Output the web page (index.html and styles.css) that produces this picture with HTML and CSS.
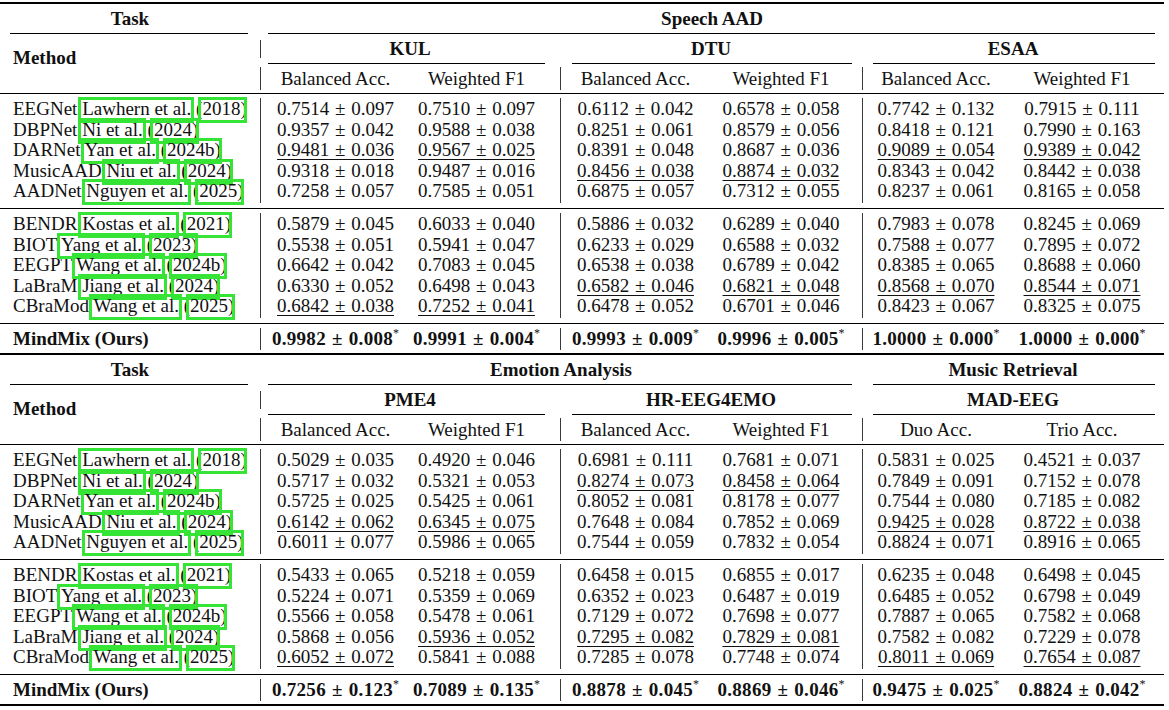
FILE: index.html
```html
<!DOCTYPE html>
<html>
<head>
<meta charset="utf-8">
<title>MindMix results</title>
<link rel="stylesheet" href="styles.css">
</head>
<body>
<table class="tbl t1">
<colgroup><col class="w-m"><col class="w-a"><col class="w-b"><col class="w-a"><col class="w-c"><col class="w-d"><col class="w-e"></colgroup>
<thead>
<tr class="r-task"><th class="task">Task</th><th colspan="6" class="grp g-all">Speech AAD</th></tr>
<tr class="r-ds"><th rowspan="2" class="method">Method</th><th colspan="2" class="ds k1 bar">KUL</th><th colspan="2" class="ds k2">DTU</th><th colspan="2" class="ds k3">ESAA</th></tr>
<tr class="r-sub"><th class="bar">Balanced Acc.</th><th class="p1">Weighted F1</th><th class="bar">Balanced Acc.</th><th class="p2">Weighted F1</th><th class="bar">Balanced Acc.</th><th class="p3">Weighted F1</th></tr>
</thead>
<tbody>
<tr class="first"><td class="m">EEGNet <span class="ct">Lawhern et al.</span> (<span class="ct y">2018</span>)</td><td class="bar">0.7514 ± 0.097</td><td class="p1">0.7510 ± 0.097</td><td class="bar">0.6112 ± 0.042</td><td class="p2">0.6578 ± 0.058</td><td class="bar">0.7742 ± 0.132</td><td class="p3">0.7915 ± 0.111</td></tr>
<tr><td class="m">DBPNet <span class="ct">Ni et al.</span> (<span class="ct y">2024</span>)</td><td class="bar">0.9357 ± 0.042</td><td class="p1">0.9588 ± 0.038</td><td class="bar">0.8251 ± 0.061</td><td class="p2">0.8579 ± 0.056</td><td class="bar">0.8418 ± 0.121</td><td class="p3">0.7990 ± 0.163</td></tr>
<tr><td class="m">DARNet <span class="ct">Yan et al.</span> (<span class="ct y">2024b</span>)</td><td class="bar"><u>0.9481 ± 0.036</u></td><td class="p1"><u>0.9567 ± 0.025</u></td><td class="bar">0.8391 ± 0.048</td><td class="p2">0.8687 ± 0.036</td><td class="bar"><u>0.9089 ± 0.054</u></td><td class="p3"><u>0.9389 ± 0.042</u></td></tr>
<tr><td class="m">MusicAAD <span class="ct">Niu et al.</span> (<span class="ct y">2024</span>)</td><td class="bar">0.9318 ± 0.018</td><td class="p1">0.9487 ± 0.016</td><td class="bar"><u>0.8456 ± 0.038</u></td><td class="p2"><u>0.8874 ± 0.032</u></td><td class="bar">0.8343 ± 0.042</td><td class="p3">0.8442 ± 0.038</td></tr>
<tr class="last"><td class="m">AADNet <span class="ct">Nguyen et al.</span> (<span class="ct y">2025</span>)</td><td class="bar">0.7258 ± 0.057</td><td class="p1">0.7585 ± 0.051</td><td class="bar">0.6875 ± 0.057</td><td class="p2">0.7312 ± 0.055</td><td class="bar">0.8237 ± 0.061</td><td class="p3">0.8165 ± 0.058</td></tr>
</tbody>
<tbody>
<tr class="first"><td class="m">BENDR <span class="ct">Kostas et al.</span> (<span class="ct y">2021</span>)</td><td class="bar">0.5879 ± 0.045</td><td class="p1">0.6033 ± 0.040</td><td class="bar">0.5886 ± 0.032</td><td class="p2">0.6289 ± 0.040</td><td class="bar">0.7983 ± 0.078</td><td class="p3">0.8245 ± 0.069</td></tr>
<tr><td class="m">BIOT <span class="ct">Yang et al.</span> (<span class="ct y">2023</span>)</td><td class="bar">0.5538 ± 0.051</td><td class="p1">0.5941 ± 0.047</td><td class="bar">0.6233 ± 0.029</td><td class="p2">0.6588 ± 0.032</td><td class="bar">0.7588 ± 0.077</td><td class="p3">0.7895 ± 0.072</td></tr>
<tr><td class="m">EEGPT <span class="ct">Wang et al.</span> (<span class="ct y">2024b</span>)</td><td class="bar">0.6642 ± 0.042</td><td class="p1">0.7083 ± 0.045</td><td class="bar">0.6538 ± 0.038</td><td class="p2">0.6789 ± 0.042</td><td class="bar">0.8385 ± 0.065</td><td class="p3">0.8688 ± 0.060</td></tr>
<tr><td class="m">LaBraM <span class="ct">Jiang et al.</span> (<span class="ct y">2024</span>)</td><td class="bar">0.6330 ± 0.052</td><td class="p1">0.6498 ± 0.043</td><td class="bar"><u>0.6582 ± 0.046</u></td><td class="p2"><u>0.6821 ± 0.048</u></td><td class="bar"><u>0.8568 ± 0.070</u></td><td class="p3"><u>0.8544 ± 0.071</u></td></tr>
<tr class="last"><td class="m">CBraMod <span class="ct">Wang et al.</span> (<span class="ct y">2025</span>)</td><td class="bar"><u>0.6842 ± 0.038</u></td><td class="p1"><u>0.7252 ± 0.041</u></td><td class="bar">0.6478 ± 0.052</td><td class="p2">0.6701 ± 0.046</td><td class="bar">0.8423 ± 0.067</td><td class="p3">0.8325 ± 0.075</td></tr>
</tbody>
<tbody>
<tr class="first last ours"><td class="m"><b>MindMix (Ours)</b></td><td class="bar"><b>0.9982 ± 0.008</b><sup>*</sup></td><td class="p1"><b>0.9991 ± 0.004</b><sup>*</sup></td><td class="bar"><b>0.9993 ± 0.009</b><sup>*</sup></td><td class="p2"><b>0.9996 ± 0.005</b><sup>*</sup></td><td class="bar"><b>1.0000 ± 0.000</b><sup>*</sup></td><td class="p3"><b>1.0000 ± 0.000</b><sup>*</sup></td></tr>
</tbody>
</table>

<table class="tbl t2">
<colgroup><col class="w-m"><col class="w-a"><col class="w-b"><col class="w-a"><col class="w-c"><col class="w-d"><col class="w-e"></colgroup>
<thead>
<tr class="r-task"><th class="task">Task</th><th colspan="4" class="grp g-emo">Emotion Analysis</th><th colspan="2" class="grp g-mus">Music Retrieval</th></tr>
<tr class="r-ds"><th rowspan="2" class="method">Method</th><th colspan="2" class="ds k1 bar">PME4</th><th colspan="2" class="ds k2">HR-EEG4EMO</th><th colspan="2" class="ds k3">MAD-EEG</th></tr>
<tr class="r-sub"><th class="bar">Balanced Acc.</th><th class="p1">Weighted F1</th><th class="bar">Balanced Acc.</th><th class="p2">Weighted F1</th><th class="bar">Duo Acc.</th><th class="p3">Trio Acc.</th></tr>
</thead>
<tbody>
<tr class="first"><td class="m">EEGNet <span class="ct">Lawhern et al.</span> (<span class="ct y">2018</span>)</td><td class="bar">0.5029 ± 0.035</td><td class="p1">0.4920 ± 0.046</td><td class="bar">0.6981 ± 0.111</td><td class="p2">0.7681 ± 0.071</td><td class="bar">0.5831 ± 0.025</td><td class="p3">0.4521 ± 0.037</td></tr>
<tr><td class="m">DBPNet <span class="ct">Ni et al.</span> (<span class="ct y">2024</span>)</td><td class="bar">0.5717 ± 0.032</td><td class="p1">0.5321 ± 0.053</td><td class="bar"><u>0.8274 ± 0.073</u></td><td class="p2"><u>0.8458 ± 0.064</u></td><td class="bar">0.7849 ± 0.091</td><td class="p3">0.7152 ± 0.078</td></tr>
<tr><td class="m">DARNet <span class="ct">Yan et al.</span> (<span class="ct y">2024b</span>)</td><td class="bar">0.5725 ± 0.025</td><td class="p1">0.5425 ± 0.061</td><td class="bar">0.8052 ± 0.081</td><td class="p2">0.8178 ± 0.077</td><td class="bar">0.7544 ± 0.080</td><td class="p3">0.7185 ± 0.082</td></tr>
<tr><td class="m">MusicAAD <span class="ct">Niu et al.</span> (<span class="ct y">2024</span>)</td><td class="bar"><u>0.6142 ± 0.062</u></td><td class="p1"><u>0.6345 ± 0.075</u></td><td class="bar">0.7648 ± 0.084</td><td class="p2">0.7852 ± 0.069</td><td class="bar"><u>0.9425 ± 0.028</u></td><td class="p3"><u>0.8722 ± 0.038</u></td></tr>
<tr class="last"><td class="m">AADNet <span class="ct">Nguyen et al.</span> (<span class="ct y">2025</span>)</td><td class="bar">0.6011 ± 0.077</td><td class="p1">0.5986 ± 0.065</td><td class="bar">0.7544 ± 0.059</td><td class="p2">0.7832 ± 0.054</td><td class="bar">0.8824 ± 0.071</td><td class="p3">0.8916 ± 0.065</td></tr>
</tbody>
<tbody>
<tr class="first"><td class="m">BENDR <span class="ct">Kostas et al.</span> (<span class="ct y">2021</span>)</td><td class="bar">0.5433 ± 0.065</td><td class="p1">0.5218 ± 0.059</td><td class="bar">0.6458 ± 0.015</td><td class="p2">0.6855 ± 0.017</td><td class="bar">0.6235 ± 0.048</td><td class="p3">0.6498 ± 0.045</td></tr>
<tr><td class="m">BIOT <span class="ct">Yang et al.</span> (<span class="ct y">2023</span>)</td><td class="bar">0.5224 ± 0.071</td><td class="p1">0.5359 ± 0.069</td><td class="bar">0.6352 ± 0.023</td><td class="p2">0.6487 ± 0.019</td><td class="bar">0.6485 ± 0.052</td><td class="p3">0.6798 ± 0.049</td></tr>
<tr><td class="m">EEGPT <span class="ct">Wang et al.</span> (<span class="ct y">2024b</span>)</td><td class="bar">0.5566 ± 0.058</td><td class="p1">0.5478 ± 0.061</td><td class="bar">0.7129 ± 0.072</td><td class="p2">0.7698 ± 0.077</td><td class="bar">0.7887 ± 0.065</td><td class="p3">0.7582 ± 0.068</td></tr>
<tr><td class="m">LaBraM <span class="ct">Jiang et al.</span> (<span class="ct y">2024</span>)</td><td class="bar">0.5868 ± 0.056</td><td class="p1"><u>0.5936 ± 0.052</u></td><td class="bar"><u>0.7295 ± 0.082</u></td><td class="p2"><u>0.7829 ± 0.081</u></td><td class="bar">0.7582 ± 0.082</td><td class="p3">0.7229 ± 0.078</td></tr>
<tr class="last"><td class="m">CBraMod <span class="ct">Wang et al.</span> (<span class="ct y">2025</span>)</td><td class="bar"><u>0.6052 ± 0.072</u></td><td class="p1">0.5841 ± 0.088</td><td class="bar">0.7285 ± 0.078</td><td class="p2">0.7748 ± 0.074</td><td class="bar"><u>0.8011 ± 0.069</u></td><td class="p3"><u>0.7654 ± 0.087</u></td></tr>
</tbody>
<tbody>
<tr class="first last ours"><td class="m"><b>MindMix (Ours)</b></td><td class="bar"><b>0.7256 ± 0.123</b><sup>*</sup></td><td class="p1"><b>0.7089 ± 0.135</b><sup>*</sup></td><td class="bar"><b>0.8878 ± 0.045</b><sup>*</sup></td><td class="p2"><b>0.8869 ± 0.046</b><sup>*</sup></td><td class="bar"><b>0.9475 ± 0.025</b><sup>*</sup></td><td class="p3"><b>0.8824 ± 0.042</b><sup>*</sup></td></tr>
</tbody>
</table>
</body>
</html>
```

FILE: styles.css
```css
:root {
  --bar: #3a3a3a;
  --rule: #000;
  --cite: #36e436;
}

body {
  margin: 0;
  background: #fff;
  color: #111;
  font-family: "Liberation Serif", "Times New Roman", serif;
  font-size: 19px;
}

.tbl {
  border-collapse: separate;
  border-spacing: 0;
  table-layout: fixed;
  width: 1164px;
  border-bottom: 2px solid var(--rule);
}

.t1 {
  margin-top: 2px;
  border-top: 2px solid var(--rule);
}

.w-m { width: 260px; }
.w-a { width: 151px; }
.w-b { width: 149px; }
.w-c { width: 151px; }
.w-d { width: 148px; }
.w-e { width: 154px; }

th, td {
  padding: 0;
  white-space: nowrap;
  text-align: center;
  vertical-align: middle;
}

th { font-weight: bold; }

/* task row with trimmed cmidrules */
.r-task th {
  line-height: 29px;
  padding-bottom: 1px;
  background-image: linear-gradient(var(--rule), var(--rule));
  background-repeat: no-repeat;
}
.r-task .task {
  background-position: 10px 100%;
  background-size: calc(100% - 22px) 1px;
}
.r-task .g-all {
  background-position: 8px 100%;
  background-size: calc(100% - 17px) 1px;
}
.r-task .g-emo {
  background-position: 8px 100%;
  background-size: calc(100% - 18px) 1px;
}
.r-task .g-mus {
  background-position: 11px 100%;
  background-size: calc(100% - 20px) 1px;
}

/* dataset row */
.method {
  text-align: left;
  vertical-align: top;
  padding: 14px 0 0 13px;
  line-height: 20px;
}
.r-ds .ds {
  line-height: 29px;
  padding-bottom: 1px;
  background-image: linear-gradient(var(--rule), var(--rule));
  background-repeat: no-repeat;
}
.r-ds .k1 { background-position: 8px 100%; background-size: calc(100% - 23px) 1px; }
.r-ds .k2 { background-position: 12px 100%; background-size: calc(100% - 22px) 1px; }
.r-ds .k3 { background-position: 11px 100%; background-size: calc(100% - 20px) 1px; }
.r-ds .ds.bar {
  background-image: linear-gradient(var(--bar), var(--bar)), linear-gradient(var(--rule), var(--rule));
  background-position: 0 6px, 8px 100%;
  background-size: 1px 18px, calc(100% - 23px) 1px;
}

/* sub header row */
.r-sub th {
  font-weight: normal;
  line-height: 29px;
}

/* vertical bars */
.bar {
  background-image: linear-gradient(var(--bar), var(--bar));
  background-repeat: no-repeat;
  background-position: 0 0;
  background-size: 1px 100%;
}
.r-sub .bar {
  background-position: 0 3px;
  background-size: 1px 23px;
}
tr.first .bar {
  background-position: 0 4px;
  background-size: 1px calc(100% - 4px);
}
tr.last .bar {
  background-size: 1px calc(100% - 5px);
}
tr.first.last .bar {
  background-position: 0 4px;
  background-size: 1px calc(100% - 7px);
}

/* body rows */
tbody td {
  line-height: 20.5px;
}
tbody tr.first td {
  border-top: 1px solid var(--rule);
  padding-top: 5.25px;
}
tbody tr.last td {
  padding-bottom: 6.25px;
}
tbody tr.ours td {
  line-height: 29px;
  padding-top: 0;
  padding-bottom: 0;
}

td.m {
  text-align: left;
  padding-left: 13px;
}

.bar, .p1, .p2, .p3 { word-spacing: 1px; }
th.bar, th.p1, th.p2, th.p3 { word-spacing: 0; }

.p1 { padding-right: 18px; }
.p2 { padding-right: 11px; }
.p3 { padding-right: 10px; }

u {
  text-decoration-thickness: 1px;
  text-underline-offset: 3px;
}

b { font-weight: bold; }
td b { letter-spacing: 0.3px; }
td.m b { letter-spacing: 0; }

sup {
  font-size: 12px;
  line-height: 0;
  vertical-align: 8px;
  font-weight: normal;
}

/* citation link boxes */
.ct {
  position: relative;
}
.ct::after {
  content: "";
  position: absolute;
  left: -4px;
  right: -3px;
  top: -1px;
  bottom: -4px;
  border: 3px solid var(--cite);
}
.ct.y::after {
  right: -7px;
}
```
